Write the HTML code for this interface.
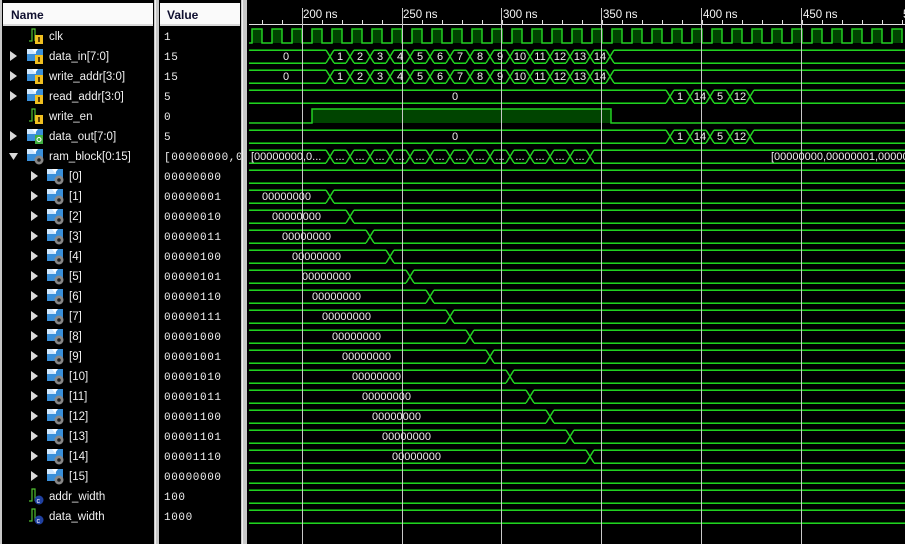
<!DOCTYPE html>
<html><head><meta charset="utf-8">
<style>
html,body{margin:0;padding:0;background:#000;width:905px;height:544px;overflow:hidden}
svg{display:block}
.n{font-family:"Liberation Sans",sans-serif;font-size:11.5px;fill:#f0f0f0}
.v{font-family:"Liberation Mono",monospace;font-size:11px;fill:#f0f0f0;letter-spacing:0.6px}
.w{font-family:"Liberation Sans",sans-serif;font-size:11px;fill:#f0f0f0}
.h{font-family:"Liberation Sans",sans-serif;font-size:12px;font-weight:bold;fill:#101030}
.r{font-family:"Liberation Sans",sans-serif;font-size:11.5px;fill:#f4f4f4}
</style></head><body>
<svg id="s" width="905" height="544" xmlns="http://www.w3.org/2000/svg">
<rect width="905" height="544" fill="#000"/>
<!-- splitters -->
<rect x="154" y="0" width="5" height="544" fill="#c8c8c8"/>
<rect x="155" y="0" width="1" height="544" fill="#f0f0f0"/>
<rect x="241" y="0" width="6" height="544" fill="#c8c8c8"/>
<rect x="242" y="0" width="1" height="544" fill="#f0f0f0"/>
<rect x="0" y="0" width="2" height="544" fill="#c8c8c8"/>
<!-- headers -->
<rect x="3" y="3" width="150" height="22" fill="#fafafa"/>
<rect x="3" y="24" width="150" height="2" fill="#d8d8d8"/>
<rect x="160" y="3" width="80" height="22" fill="#fafafa"/>
<rect x="160" y="24" width="80" height="2" fill="#d8d8d8"/>
<text class="h" x="11" y="19">Name</text>
<text class="h" x="167" y="19">Value</text>
<g id="wave"></g>
<g id="icons"></g>
<!-- ruler labels -->
<text class="r" x="303" y="18">200 ns</text>
<text class="r" x="403" y="18">250 ns</text>
<text class="r" x="503" y="18">300 ns</text>
<text class="r" x="603" y="18">350 ns</text>
<text class="r" x="703" y="18">400 ns</text>
<text class="r" x="803" y="18">450 ns</text>
<text class="r" x="903" y="18">500 ns</text>
<!-- names -->
<text class="n" x="49" y="40">clk</text>
<text class="n" x="49" y="60">data_in[7:0]</text>
<text class="n" x="49" y="80">write_addr[3:0]</text>
<text class="n" x="49" y="100">read_addr[3:0]</text>
<text class="n" x="49" y="120">write_en</text>
<text class="n" x="49" y="140">data_out[7:0]</text>
<text class="n" x="49" y="160">ram_block[0:15]</text>
<text class="n" x="69" y="180">[0]</text>
<text class="n" x="69" y="200">[1]</text>
<text class="n" x="69" y="220">[2]</text>
<text class="n" x="69" y="240">[3]</text>
<text class="n" x="69" y="260">[4]</text>
<text class="n" x="69" y="280">[5]</text>
<text class="n" x="69" y="300">[6]</text>
<text class="n" x="69" y="320">[7]</text>
<text class="n" x="69" y="340">[8]</text>
<text class="n" x="69" y="360">[9]</text>
<text class="n" x="69" y="380">[10]</text>
<text class="n" x="69" y="400">[11]</text>
<text class="n" x="69" y="420">[12]</text>
<text class="n" x="69" y="440">[13]</text>
<text class="n" x="69" y="460">[14]</text>
<text class="n" x="69" y="480">[15]</text>
<text class="n" x="49" y="500">addr_width</text>
<text class="n" x="49" y="520">data_width</text>
<!-- values -->
<svg x="160" y="0" width="81" height="544">
<text class="v" x="4" y="40">1</text>
<text class="v" x="4" y="60">15</text>
<text class="v" x="4" y="80">15</text>
<text class="v" x="4" y="100">5</text>
<text class="v" x="4" y="120">0</text>
<text class="v" x="4" y="140">5</text>
<text class="v" x="4" y="160">[00000000,00000001]</text>
<text class="v" x="4" y="180">00000000</text>
<text class="v" x="4" y="200">00000001</text>
<text class="v" x="4" y="220">00000010</text>
<text class="v" x="4" y="240">00000011</text>
<text class="v" x="4" y="260">00000100</text>
<text class="v" x="4" y="280">00000101</text>
<text class="v" x="4" y="300">00000110</text>
<text class="v" x="4" y="320">00000111</text>
<text class="v" x="4" y="340">00001000</text>
<text class="v" x="4" y="360">00001001</text>
<text class="v" x="4" y="380">00001010</text>
<text class="v" x="4" y="400">00001011</text>
<text class="v" x="4" y="420">00001100</text>
<text class="v" x="4" y="440">00001101</text>
<text class="v" x="4" y="460">00001110</text>
<text class="v" x="4" y="480">00000000</text>
<text class="v" x="4" y="500">100</text>
<text class="v" x="4" y="520">1000</text>
</svg>
<!-- wave labels -->
<g class="w" text-anchor="middle">
<text x="286" y="60">0</text><text x="286" y="80">0</text>
<text x="340" y="60">1</text><text x="360" y="60">2</text><text x="380" y="60">3</text><text x="400" y="60">4</text><text x="420" y="60">5</text><text x="440" y="60">6</text><text x="460" y="60">7</text><text x="480" y="60">8</text><text x="500" y="60">9</text><text x="520" y="60">10</text><text x="540" y="60">11</text><text x="560" y="60">12</text><text x="580" y="60">13</text><text x="600" y="60">14</text>
<text x="340" y="80">1</text><text x="360" y="80">2</text><text x="380" y="80">3</text><text x="400" y="80">4</text><text x="420" y="80">5</text><text x="440" y="80">6</text><text x="460" y="80">7</text><text x="480" y="80">8</text><text x="500" y="80">9</text><text x="520" y="80">10</text><text x="540" y="80">11</text><text x="560" y="80">12</text><text x="580" y="80">13</text><text x="600" y="80">14</text>
<text x="455" y="100">0</text><text x="455" y="140">0</text>
<text x="680" y="100">1</text><text x="700" y="100">14</text><text x="720" y="100">5</text><text x="740" y="100">12</text>
<text x="680" y="140">1</text><text x="700" y="140">14</text><text x="720" y="140">5</text><text x="740" y="140">12</text>
<text x="340" y="160">...</text><text x="360" y="160">...</text><text x="380" y="160">...</text><text x="400" y="160">...</text><text x="420" y="160">...</text><text x="440" y="160">...</text><text x="460" y="160">...</text><text x="480" y="160">...</text><text x="500" y="160">...</text><text x="520" y="160">...</text><text x="540" y="160">...</text><text x="560" y="160">...</text><text x="580" y="160">...</text>
</g>
<g class="w">
<text x="251" y="160">[00000000,0...</text>
<text x="771" y="160">[00000000,00000001,00000010</text>
<text x="262" y="200">00000000</text>
<text x="272" y="220">00000000</text>
<text x="282" y="240">00000000</text>
<text x="292" y="260">00000000</text>
<text x="302" y="280">00000000</text>
<text x="312" y="300">00000000</text>
<text x="322" y="320">00000000</text>
<text x="332" y="340">00000000</text>
<text x="342" y="360">00000000</text>
<text x="352" y="380">00000000</text>
<text x="362" y="400">00000000</text>
<text x="372" y="420">00000000</text>
<text x="382" y="440">00000000</text>
<text x="392" y="460">00000000</text>
</g>
</svg>
<script>
(function(){
var NS="http://www.w3.org/2000/svg";
var wave=document.getElementById('wave'), icons=document.getElementById('icons');
function el(p,tag,a){var e=document.createElementNS(NS,tag);for(var k in a)e.setAttribute(k,a[k]);p.appendChild(e);return e;}
var G="#22d022", D="#0a7a0a", F="#004400";
function line(x1,y1,x2,y2,c,w){el(wave,'line',{x1:x1,y1:y1,x2:x2,y2:y2,stroke:c||G,'stroke-width':w||1});}
function hl(x1,x2,y){line(x1,y+0.5,x2,y+0.5,D);line(x1,y+1.5,x2,y+1.5,G);}
function c(i){return 36+20*i;}
var X0=249,X1=905;
// ruler
el(wave,'rect',{x:249,y:24,width:656,height:1,fill:"#e0e0e0"});
for(var x=262;x<905;x+=20){el(wave,'rect',{x:x,y:20,width:1,height:4,fill:"#e0e0e0"});}
// bus
function bus(i,tr){
  var t=c(i)-7,b=c(i)+6,pts=[X0].concat(tr).concat([X1]);
  for(var k=0;k<pts.length-1;k++){
    var a=pts[k]+(k>0?4:0), e=pts[k+1]-(k<pts.length-2?4:0);
    hl(a,e,t);hl(a,e,b);
  }
  tr.forEach(function(x){
    line(x-4,t+1,x+4,b+1,G,1.5);line(x-4,b+1,x+4,t+1,G,1.5);
  });
}
// clock
(function(){
  var t=c(0)-7,b=c(0)+7,d="M249 "+b;
  for(var x=252;x<905;x+=20){
    el(wave,'rect',{x:x,y:t,width:Math.min(10,905-x),height:b-t,fill:F});
    d+=" L"+x+" "+b+" L"+x+" "+t+" L"+Math.min(x+10,905)+" "+t+" L"+Math.min(x+10,905)+" "+b;
  }
  el(wave,'path',{d:d,fill:"none",stroke:G,'stroke-width':1.5});
})();
var seq=[];for(var x=330;x<=610;x+=20)seq.push(x);
bus(1,seq);bus(2,seq);
bus(3,[670,690,710,730,750]);
// write_en
(function(){var t=c(4)-7,b=c(4)+7;
 el(wave,'rect',{x:312,y:t,width:299,height:b-t,fill:F});
 el(wave,'path',{d:"M249 "+b+" L312 "+b+" L312 "+t+" L611 "+t+" L611 "+b+" L905 "+b,fill:"none",stroke:G,'stroke-width':1.5});
})();
bus(5,[670,690,710,730,750]);
var s2=[];for(var x=330;x<=590;x+=20)s2.push(x);
bus(6,s2);
bus(7,[]);
for(var i=1;i<=14;i++)bus(7+i,[310+20*i]);
bus(22,[]);bus(23,[]);bus(24,[]);
// grid
[302,402,501,601,701,801].forEach(function(x){el(wave,'rect',{x:x,y:8,width:1,height:536,fill:"#c8c8c8"});});
// icons
function tri(x,y,down){
  if(down) el(icons,'path',{d:"M"+x+" "+(y-3)+" L"+(x+9)+" "+(y-3)+" L"+(x+4.5)+" "+(y+4)+" Z",fill:"#d8d8d8"});
  else el(icons,'path',{d:"M"+x+" "+(y-5)+" L"+(x+7)+" "+y+" L"+x+" "+(y+5)+" Z",fill:"#d8d8d8"});
}
function busIcon(x,y,badge){
  el(icons,'rect',{x:x,y:y-7,width:16,height:12,fill:"#3a8fd8"});
  el(icons,'rect',{x:x,y:y-7,width:9,height:5,fill:"#cfe8ff"});
  el(icons,'path',{d:"M"+(x+5)+" "+(y-7)+" L"+(x+8)+" "+(y-3)+" L"+(x+11)+" "+(y-7)+" Z",fill:"#fff"});
  if(badge=="I"){el(icons,'rect',{x:x+8,y:y-1,width:8,height:9,fill:"#f0c020"});el(icons,'rect',{x:x+11,y:y+1,width:2,height:5,fill:"#604000"});}
  else if(badge=="O"){el(icons,'rect',{x:x+8,y:y-1,width:8,height:9,fill:"#40b040"});el(icons,'circle',{cx:x+12,cy:y+3.5,r:2,fill:"none",stroke:"#fff"});}
  else {el(icons,'circle',{cx:x+12,cy:y+4,r:4.5,fill:"#888"});el(icons,'circle',{cx:x+12,cy:y+4,r:1.8,fill:"#222"});}
}
function clkIcon(x,y,badge){
  el(icons,'path',{d:"M"+x+" "+(y+5)+" L"+(x+3)+" "+(y+5)+" L"+(x+3)+" "+(y-7)+" L"+(x+6)+" "+(y-7)+" L"+(x+6)+" "+(y+5),fill:"none",stroke:"#50c030",'stroke-width':1.2});
  if(badge=="I"){el(icons,'rect',{x:x+6,y:y-1,width:8,height:9,fill:"#f0c020"});el(icons,'rect',{x:x+9,y:y+1,width:2,height:5,fill:"#604000"});}
  else {el(icons,'circle',{cx:x+10,cy:y+4,r:4.5,fill:"#2040a0"});el(icons,'text',{x:x+7.5,y:y+7,'font-size':7,fill:"#fff",'font-family':"Liberation Sans"}).textContent="c";}
}
clkIcon(29,c(0),"I");
tri(10,c(1));busIcon(27,c(1),"I");
tri(10,c(2));busIcon(27,c(2),"I");
tri(10,c(3));busIcon(27,c(3),"I");
clkIcon(29,c(4),"I");
tri(10,c(5));busIcon(27,c(5),"O");
tri(9,c(6),true);busIcon(27,c(6),"A");
for(var i=7;i<=22;i++){tri(31,c(i));busIcon(47,c(i),"A");}
clkIcon(29,c(23),"C");clkIcon(29,c(24),"C");
})();
</script>
</body></html>
